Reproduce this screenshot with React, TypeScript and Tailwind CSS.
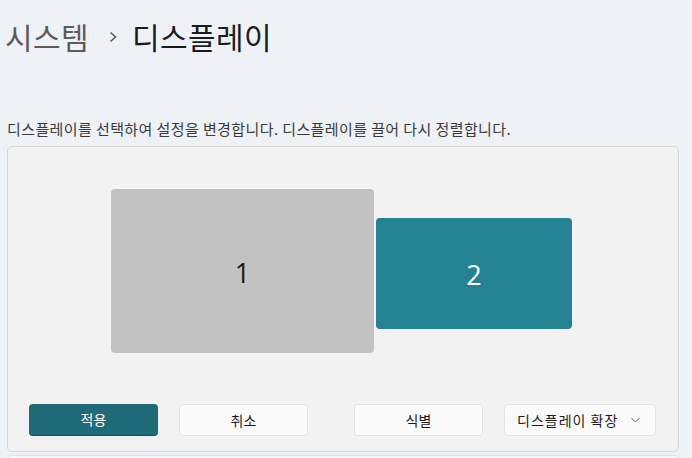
import React from "react";

const KR = { fontFamily: '"Noto Sans CJK KR", "Noto Sans", sans-serif' };
const NUM = { fontFamily: '"Open Sans", "Noto Sans", sans-serif' };

export default function App() {
  return (
    <div className="w-[692px] h-[458px] overflow-hidden bg-[#eef2f6] text-[#1b1b1b]" style={KR}>
      <div className="flex items-center pl-[5px] pt-[14px] h-[58px] text-[30px] leading-[38px] tracking-[0.4px]">
        <span className="text-[#5c5c5c]">시스템</span>
        <svg className="ml-[19px] mr-[14px] mt-[2px]" width="10" height="12" viewBox="0 0 10 12" fill="none">
          <path d="M2.5 1.5 L7.5 6 L2.5 10.5" stroke="#5c5c5c" strokeWidth="1.6" />
        </svg>
        <span className="text-[#1b1b1b]">디스플레이</span>
      </div>
      <div className="mt-[61px] pl-[7px] text-[15px] leading-[20px] tracking-[0.4px] text-[#3a3a3a]">
        디스플레이를 선택하여 설정을 변경합니다. 디스플레이를 끌어 다시 정렬합니다.
      </div>
      <div className="mt-[7px] ml-[7px] w-[672px] h-[306px] rounded-[5px] border border-[#d4d6d8] bg-[#f2f2f2] flex flex-col">
        <div className="relative h-[257px]">
          <div className="absolute left-[103px] top-[42px] w-[263px] h-[164px] rounded-[4px] bg-[#c2c2c2] flex items-center justify-center">
            <span className="pt-[5px] text-[27px] text-[#1b1b1b]" style={NUM}>1</span>
          </div>
          <div className="absolute left-[368px] top-[71px] w-[196px] h-[111px] rounded-[4px] bg-[#248393] flex items-center justify-center">
            <span className="pt-[3px] text-[27px] text-white" style={NUM}>2</span>
          </div>
        </div>
        <div className="flex items-center pl-[21px] h-[32px]">
          <button className="w-[129px] h-[32px] rounded-[4px] bg-[#1f6b78] border-b border-[#164f59] text-white text-[14px]">
            적용
          </button>
          <button className="ml-[21px] w-[129px] h-[32px] rounded-[4px] bg-[#fbfbfb] border border-[#e3e3e3] text-[14px] text-[#1b1b1b]">
            취소
          </button>
          <button className="ml-[46px] w-[129px] h-[32px] rounded-[4px] bg-[#fbfbfb] border border-[#e3e3e3] text-[14px] text-[#1b1b1b]">
            식별
          </button>
          <button className="ml-[21px] w-[152px] h-[32px] rounded-[4px] bg-[#fbfbfb] border border-[#e3e3e3] text-[14px] tracking-[1px] text-[#1b1b1b] flex items-center pl-[12px] pr-[15px]">
            <span className="flex-1 text-left">디스플레이 확장</span>
            <svg width="9" height="6" viewBox="0 0 9 6" fill="none">
              <path d="M0.5 1 L4.5 5 L8.5 1" stroke="#5c5c5c" strokeWidth="1" />
            </svg>
          </button>
        </div>
      </div>
      <div className="mt-[3px] ml-[7px] w-[672px] h-[20px] rounded-t-[5px] border border-[#dfe2e5] bg-[#f5f7f9]" />
    </div>
  );
}
